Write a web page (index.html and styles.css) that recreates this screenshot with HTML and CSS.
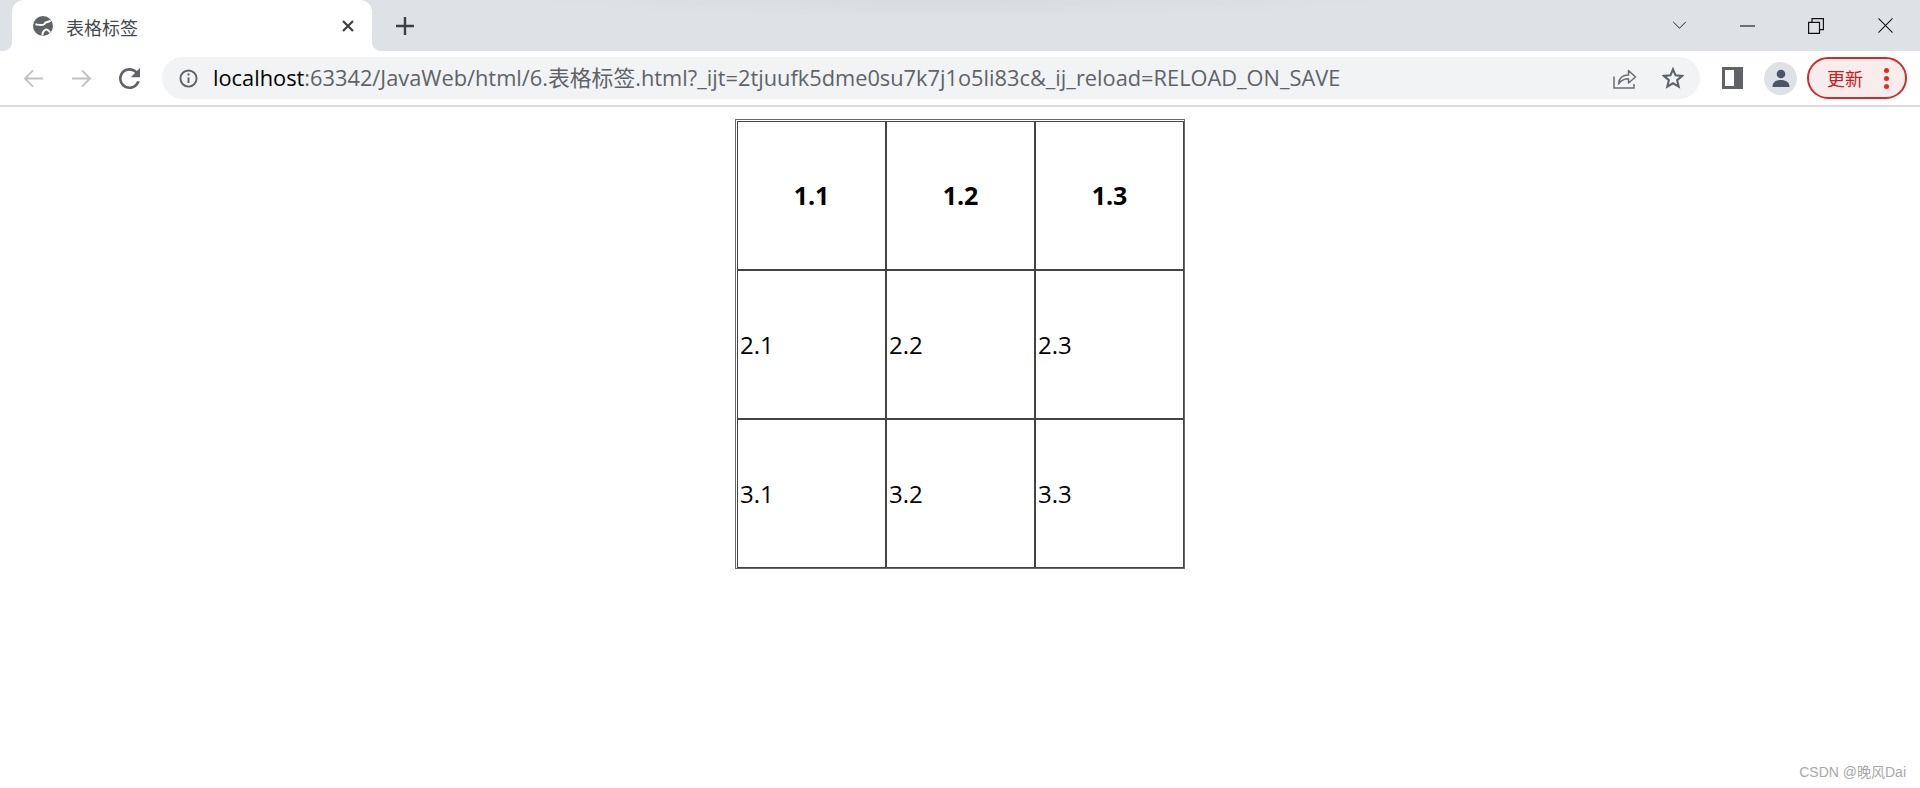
FILE: index.html
```html
<!DOCTYPE html>
<html lang="zh-CN">
<head>
<meta charset="utf-8">
<title>表格标签</title>
<link rel="stylesheet" href="styles.css">
</head>
<body>
<header class="browser">
  <div class="tabstrip">
    <div class="tab">
      <svg class="favicon" viewBox="0 0 20 20"><circle cx="10" cy="10" r="10" fill="#5f6368"/><path d="M17.500 4.500C15 7 12.800 5 11.500 7.800 10.500 10 7 9 2.500 8.300" stroke="#fff" stroke-width="2" fill="none"/><path d="M9.500 19.500c-.5-3.500 1-4.500 2.500-5.500 1.500-1 3.500 0 5 2.500" stroke="#fff" stroke-width="2" fill="none"/></svg>
      <span class="tab-title">表格标签</span>
      <svg class="tab-close" viewBox="0 0 14 14"><path d="M2 2l10 10M12 2L2 12" stroke="#3c4043" stroke-width="2.200" fill="none"/></svg>
    </div>
    <button class="newtab" aria-label="新标签页"><svg viewBox="0 0 18 18"><path d="M9 0v18M0 9h18" stroke="#3c4043" stroke-width="2.400" fill="none"/></svg></button>
    <div class="winctl">
      <svg class="winbtn chev" viewBox="0 0 16 10"><path d="M1 1l7 7 7-7" stroke="#222" stroke-width="1.100" fill="none"/></svg>
      <svg class="winbtn min" viewBox="0 0 16 2"><path d="M0 1h16" stroke="#111" stroke-width="1.200" fill="none"/></svg>
      <svg class="winbtn rest" viewBox="0 0 16 16"><path d="M.6 4.400h10.900v11H.6zM4 4.200V.6h11.400v11h-3.800" stroke="#111" stroke-width="1.200" fill="none"/></svg>
      <svg class="winbtn cls" viewBox="0 0 16 16"><path d="M.5.5l15 15M15.500.5l-15 15" stroke="#111" stroke-width="1.100" fill="none"/></svg>
    </div>
  </div>
  <div class="toolbar">
    <span class="navbtn"><svg viewBox="0 0 22 20"><path d="M21 10H2M10.500 1.500L2 10l8.500 8.500" stroke="#bfc2c5" stroke-width="2" fill="none"/></svg></span>
    <span class="navbtn"><svg viewBox="0 0 22 20"><path d="M1 10h19M11.500 1.500L20 10l-8.500 8.500" stroke="#bfc2c5" stroke-width="2" fill="none"/></svg></span>
    <span class="navbtn"><svg class="reload" viewBox="4 4 16 16"><path fill="#5f6368" d="M17.650 6.350C16.200 4.900 14.210 4 12 4c-4.420 0-7.990 3.580-7.990 8s3.570 8 7.990 8c3.730 0 6.840-2.550 7.730-6h-2.080c-.82 2.330-3.040 4-5.650 4-3.310 0-6-2.690-6-6s2.690-6 6-6c1.660 0 3.140.69 4.220 1.780L13 11h7V4l-2.350 2.350z"/></svg></span>
    <div class="omnibox">
      <svg class="info" viewBox="0 0 20 20"><circle cx="10" cy="10" r="8.500" stroke="#5f6368" stroke-width="2" fill="none"/><path d="M10 8.800v6" stroke="#5f6368" stroke-width="2"/><circle cx="10" cy="5.800" r="1.200" fill="#5f6368"/></svg>
      <div class="url"><span class="host">localhost</span>:63342/JavaWeb/html/6.表格标签.html?_ijt=2tjuufk5dme0su7k7j1o5li83c&amp;_ij_reload=RELOAD_ON_SAVE</div>
      <svg class="share" viewBox="0 0 24 22"><path d="M1 9.500V21h20v-4" stroke="#6b6f73" stroke-width="1.500" fill="none"/><path d="M5.500 17c.5-5.500 4-9 10-9V3.500l7 6.500-7 6v-4.200c-4.500 0-7.500 1.500-10 5.200z" stroke="#6b6f73" stroke-width="1.500" fill="none" stroke-linejoin="round"/></svg>
      <svg class="star" viewBox="0 0 24 24"><path d="M12 2.500l2.800 6.600 7.200.6-5.500 4.700 1.700 7-6.200-3.700-6.200 3.700 1.700-7L2 9.700l7.200-.6z" stroke="#5f6368" stroke-width="2.300" fill="none" stroke-linejoin="miter"/></svg>
    </div>
    <span class="sidepanel"><span class="sidepanel-pane"></span></span>
    <span class="avatar"><svg viewBox="0 0 20 20"><circle cx="10" cy="6" r="4.300" fill="#4a5568"/><path d="M1.500 19c0-5 3.800-7 8.500-7s8.500 2 8.500 7z" fill="#4a5568"/></svg></span>
    <div class="update"><span class="update-label">更新</span><span class="dots"><i></i><i></i><i></i></span></div>
  </div>
</header>
<main class="page">
  <table class="grid">
    <tr><th>1.1</th><th>1.2</th><th>1.3</th></tr>
    <tr><td>2.1</td><td>2.2</td><td>2.3</td></tr>
    <tr><td>3.1</td><td>3.2</td><td>3.3</td></tr>
  </table>
</main>
<div class="watermark">CSDN @晚风Dai</div>
</body>
</html>
```

FILE: styles.css
```css
* { box-sizing: border-box; }
html, body { margin: 0; padding: 0; height: 788px; overflow: hidden; background: #fff; }
body { font-family: "Open Sans", "Noto Sans CJK SC", sans-serif; color: #000; position: relative; }

.browser { display: block; }

.tabstrip {
  display: flex;
  align-items: center;
  height: 51px;
  background: radial-gradient(ellipse 420px 16px at 960px 0, #d7dade, #dee1e6);
  position: relative;
}
.tab {
  position: relative;
  display: flex;
  align-items: center;
  align-self: stretch;
  width: 360px;
  margin-left: 12px;
  padding: 0 16px 0 21px;
  background: #fff;
  border-radius: 12px 12px 0 0;
}
.tab::before, .tab::after {
  content: "";
  position: absolute;
  bottom: 0;
  width: 10px;
  height: 10px;
}
.tab::before { left: -10px; background: radial-gradient(circle at 0 0, #dee1e6 10px, #fff 10.5px); }
.tab::after { right: -10px; background: radial-gradient(circle at 100% 0, #dee1e6 10px, #fff 10.5px); }
.favicon { width: 20px; height: 20px; flex: none; margin-top: 1px; }
.tab-title {
  margin-left: 13px;
  font-size: 18px;
  color: #45494d;
  font-family: "Noto Sans CJK SC", sans-serif;
  line-height: 24px;
  flex: 1;
  margin-top: 2px;
}
.tab-close { width: 14px; height: 14px; flex: none; margin-right: 1px; }

.newtab {
  width: 18px;
  height: 18px;
  padding: 0;
  margin-left: 24px;
  margin-top: 1px;
  border: 0;
  background: none;
  display: block;
}
.newtab svg { display: block; width: 18px; height: 18px; }

.winctl {
  margin-left: auto;
  display: flex;
  align-items: center;
  width: 270px;
  height: 42px;
  flex: none;
  padding-right: 27px;
  justify-content: flex-end;
  gap: 0;
}
.winbtn { display: block; flex: none; }
.chev { width: 15px; height: 9px; margin-right: 53px; }
.min { width: 15px; height: 2px; margin-right: 53px; }
.rest { width: 16px; height: 16px; margin-right: 54px; }
.cls { width: 15px; height: 15px; }

.toolbar {
  display: flex;
  align-items: center;
  height: 56px;
  padding: 0 12px 0 9px;
  background: #fff;
  border-bottom: 2px solid #dadbdc;
}
.navbtn {
  width: 48px;
  height: 42px;
  display: flex;
  align-items: center;
  justify-content: center;
  flex: none;
}
.navbtn svg { width: 21px; height: 19px; }
.navbtn .reload { width: 21px; height: 21px; }

.omnibox {
  display: flex;
  align-items: center;
  width: 1538px;
  height: 42px;
  margin-left: 9px;
  padding: 0 16px 0 17px;
  background: #f1f3f4;
  border-radius: 21px;
  flex: none;
}
.info { width: 19px; height: 19px; flex: none; }
.url {
  margin-left: 15px;
  font-size: 21.800px;
  line-height: 28px;
  color: #5f6368;
  white-space: nowrap;
  flex: 1;
  font-family: "Open Sans", "Noto Sans CJK SC", sans-serif;
}
.host { color: #000; }
.share { width: 24px; height: 22px; flex: none; margin-right: 25px; }
.star { width: 22px; height: 22px; flex: none; }

.sidepanel {
  width: 21px;
  height: 22px;
  margin-left: 22px;
  background: #5f6368;
  padding: 3px 9px 3px 3px;
  flex: none;
}
.sidepanel-pane { display: block; width: 9px; height: 16px; background: #fff; }

.avatar {
  width: 33px;
  height: 33px;
  margin-left: 21px;
  border-radius: 50%;
  background: #dee1e6;
  display: flex;
  align-items: center;
  justify-content: center;
  flex: none;
}
.avatar svg { width: 20px; height: 20px; }

.update {
  display: flex;
  align-items: center;
  width: 100px;
  height: 42px;
  margin-left: 10px;
  padding: 0 16px 0 18px;
  border: 2px solid #cc2f2b;
  border-radius: 21px;
  background: #f9ecec;
  flex: none;
}
.update-label {
  font-family: "Noto Sans CJK SC", sans-serif;
  font-size: 18px;
  color: #c5221f;
  flex: 1;
  line-height: 24px;
}
.dots { display: flex; flex-direction: column; gap: 3px; }
.dots i { display: block; width: 5px; height: 5px; border-radius: 50%; background: #d93025; }

.page { display: block; padding-top: 12px; }
.grid {
  width: 450px;
  height: 449px;
  margin: 0 auto;
  border: 1px solid #666;
  padding: 1px 0 0 1px;
  border-spacing: 0;
  table-layout: fixed;
  font-size: 24px;
  line-height: 32px;
}
.grid th, .grid td { border: 1px solid #444; padding: 1px; height: 149px; }
.grid th { font-weight: 700; text-align: center; font-size: 25px; padding-bottom: 3px; }
.grid td { font-weight: 400; text-align: left; padding-left: 2px; }

.watermark {
  position: absolute;
  right: 14px;
  top: 763px;
  font-family: "Liberation Sans", "Noto Sans CJK SC", sans-serif;
  font-size: 14px;
  line-height: 18px;
  color: #a8a8a8;
  white-space: nowrap;
}
```
